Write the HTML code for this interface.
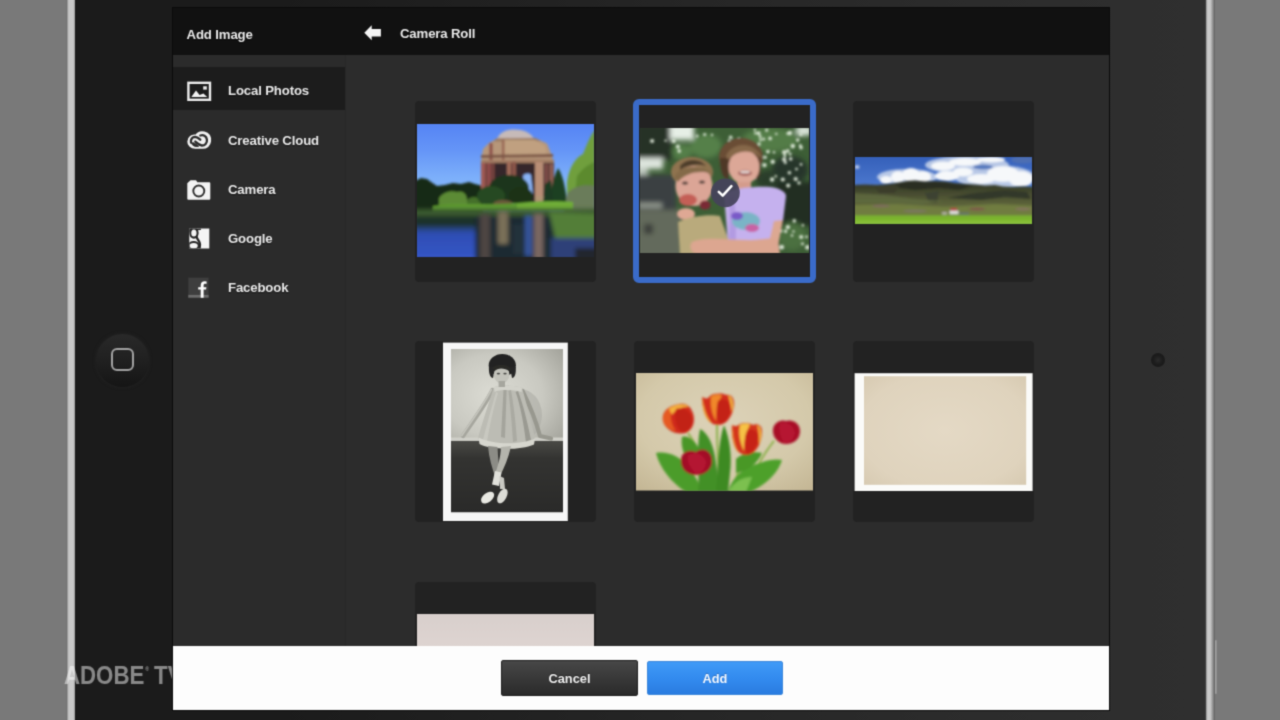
<!DOCTYPE html>
<html>
<head>
<meta charset="utf-8">
<title>Add Image</title>
<style>
*{box-sizing:border-box;margin:0;padding:0}
html,body{width:1280px;height:720px;overflow:hidden}
body{background:#797979;font-family:"Liberation Sans",sans-serif;font-weight:bold;font-size:13px;color:#e9e9e9;position:relative}
.abs{position:absolute}
#stage{position:absolute;left:-20px;top:-20px;width:1320px;height:760px;filter:url(#soft);background:#797979}
#stage>*{margin-left:20px;margin-top:20px}
#pad{display:none}
#edgeL{left:66px;top:-20px;width:9px;height:760px;background:linear-gradient(90deg,#5e5e5e 0,#8a8a8a 12%,#c6c6c6 30%,#cacaca 80%,#9a9a9a 100%)}
#edgeR{left:1205px;top:-20px;width:10px;height:760px;background:linear-gradient(90deg,#0c0c0c 0,#9a9a9a 14%,#cccccc 28%,#c4c4c4 55%,#8c8c8c 80%,#5c5c5c 100%)}
#bezel{left:75px;top:-20px;width:1130px;height:760px;background:linear-gradient(90deg,#1b1b1b 0,#1b1b1b 18%,#212121 38%,#262626 55%,#2c2c2c 80%,#2f2f2f 100%)}
#home{left:96px;top:334px;width:53px;height:53px;border-radius:50%;background:linear-gradient(180deg,#292929 0,#1f1f1f 55%,#151515 100%);box-shadow:0 0 3px 1px rgba(40,40,40,.5)}
#homesq{left:111px;top:348px;width:23px;height:23px;border:2px solid #a2a2a2;border-radius:6px}
#cam{left:1151px;top:353px;width:14px;height:14px;border-radius:50%;background:radial-gradient(circle at 50% 50%,#2b2b2b 0,#1c1c1c 45%,#171717 100%)}
#wm{left:64px;top:661.4px;font-weight:bold;font-size:26px;color:rgba(255,255,255,.48);white-space:nowrap;line-height:28px;transform:scaleX(.855);transform-origin:0 0;filter:blur(.4px)}
#wm sup{font-size:6px;vertical-align:top;position:relative;top:-6px;margin:0 0 0 1px}
#dlg{left:172px;top:7px;width:938px;height:704px;background:#0a0a0a}
#hdr{left:173px;top:8px;width:936px;height:47px;background:#111111}
#side{left:173px;top:55px;width:172px;height:591px;background:#2b2b2b}
#main{left:345px;top:55px;width:764px;height:591px;background:#2c2c2c;border-left:1px solid #272727}
#sel{left:173px;top:67px;width:172px;height:43px;background:#1c1c1c}
#foot{left:173px;top:646px;width:936px;height:64px;background:#fdfdfd}
.t{white-space:nowrap;line-height:16px;font-size:13.2px;letter-spacing:-.15px;text-shadow:0 1px 1px rgba(0,0,0,.6);filter:blur(.3px)}
.tile{width:181px;height:181px;background:#222222;border-radius:4px}
.btn{height:35px;border-radius:2px;text-align:center;line-height:35px}
#cancel{left:501px;top:660px;width:137px;height:36px;line-height:36px;background:linear-gradient(180deg,#474747 0,#3a3a3a 45%,#2a2a2a 100%);border:1px solid #1d1d1d;color:#f1f1f1;text-shadow:0 -1px 0 rgba(0,0,0,.5)}
#add{left:647px;top:661px;width:136px;height:34px;line-height:34px;background:linear-gradient(180deg,#3f9af7 0,#338bef 50%,#2a7ce0 100%);border:1px solid #3a86dc;color:#f4f9ff;text-shadow:0 -1px 0 rgba(0,40,110,.35)}
.bt{display:inline-block;font-size:12.8px;filter:blur(.3px);position:relative;top:.4px}
svg{display:block}
</style>
</head>
<body>
<svg width="0" height="0" style="position:absolute"><defs><filter id="soft" x="0" y="0" width="100%" height="100%" color-interpolation-filters="sRGB"><feConvolveMatrix order="3" kernelMatrix="0.0289 0.1122 0.0289 0.1122 0.4356 0.1122 0.0289 0.1122 0.0289" edgeMode="duplicate" preserveAlpha="true"/></filter></defs></svg>
<div id="stage">
<div id="pad"></div>
<div class="abs" id="bezel"></div>
<div class="abs" id="edgeL"></div>
<div class="abs" id="edgeR"></div>
<div class="abs" style="left:1215px;top:640px;width:2px;height:54px;background:linear-gradient(90deg,#a9a9a9,#8a8a8a);border-radius:1px"></div>
<div class="abs" id="home"></div>
<div class="abs" id="homesq"></div>
<div class="abs" id="cam"></div>
<div class="abs" id="wm">ADOBE<sup>&reg;</sup><span style="margin-left:-1.2px"> TV</span></div>

<div class="abs" id="dlg"></div>
<div class="abs" id="hdr"></div>
<div class="abs" id="side"></div>
<div class="abs" id="main"></div>
<div class="abs" id="sel"></div>

<!-- header text -->
<div class="abs t" style="left:186.6px;top:26.5px">Add Image</div>
<div class="abs t" style="left:400px;top:25.6px">Camera Roll</div>
<svg class="abs" style="left:360px;top:22px" width="26" height="22" viewBox="360 22 26 22"><polygon points="364.3,32.7 371.7,25.3 371.7,29.1 380.9,29.1 380.9,36.4 371.7,36.4 371.7,40.2" fill="#f4f4f4"/></svg>

<!-- sidebar labels -->
<div class="abs t" style="left:228px;top:83px">Local Photos</div>
<div class="abs t" style="left:228px;top:133px">Creative Cloud</div>
<div class="abs t" style="left:228px;top:182px">Camera</div>
<div class="abs t" style="left:228px;top:231px">Google</div>
<div class="abs t" style="left:228px;top:280px">Facebook</div>

<!-- ICONS -->
<svg class="abs" style="left:173px;top:55px;filter:blur(.35px)" width="172" height="300" viewBox="173 55 172 300">
 <!-- local photos -->
 <rect x="188.4" y="82.8" width="21.6" height="17" fill="none" stroke="#ececec" stroke-width="2.4"/>
 <polygon points="191.3,97 196,90.4 199.6,95 203.4,93.4 207.2,97" fill="#f2f2f2"/>
 <rect x="203.2" y="86.3" width="3.6" height="3.3" fill="#ececec"/>
 <!-- creative cloud -->
 <path d="M196.5,148.1 C190.3,148.5 187.9,144.6 188,141.5 C188.1,137.3 191.8,134.3 196,135.3 C197.7,132.6 201.2,131.6 204.3,132.3 C208.5,133.4 210.8,137 210.4,141.3 C210,145.6 206.5,148.2 202.4,148.1 Z" fill="#f1f1f1" stroke="#f1f1f1" stroke-width="1.4" stroke-linejoin="round"/>
 <g fill="none" stroke="#2b2b2b" stroke-linecap="round">
  <path d="M191,142.6 C190.3,139.2 192.4,136.9 195.1,136.8 C197.2,136.8 198.5,138 200.3,139.7" stroke-width="2.3"/>
  <path d="M200.3,135.5 C203.2,134.5 206.4,135.8 206.9,139.5 C207.4,143.2 204.8,145.7 201.7,145.5 C199.4,145.3 197.6,143.5 195.3,141.5" stroke-width="2.3"/>
 </g>
 <path d="M191.6,143.2 C192.2,145.6 195,147 198.6,146.3 L195,143.4 C194.2,142.7 192.6,142.5 191.6,143.2 Z" fill="#2b2b2b" stroke="#2b2b2b" stroke-width="1"/>
 <!-- camera -->
 <path d="M188.3,182.2 L190.6,180.2 L196,180.2 L197.4,182.2 L209.2,182.2 Q210.3,182.2 210.3,183.3 L210.3,198.7 Q210.3,199.8 209.2,199.8 L188.4,199.8 Q187.3,199.8 187.3,198.7 L187.3,183.2 Z" fill="#f3f3f3"/>
 <circle cx="198.8" cy="191" r="5.5" fill="none" stroke="#303030" stroke-width="1.9"/>
 <!-- google -->
 <clipPath id="gclip"><rect x="189.3" y="228.5" width="20" height="20"/></clipPath>
 <rect x="189.3" y="228.5" width="20" height="20" fill="#f4f4f4"/>
 <g fill="none" stroke="#262626" stroke-linecap="round" clip-path="url(#gclip)">
  <ellipse cx="193.9" cy="233" rx="3.7" ry="4.6" stroke-width="2.1"/>
  <ellipse cx="193.7" cy="245.7" rx="5" ry="3.7" stroke-width="1.9"/>
  <path d="M196.6,237 C197.4,240 200.4,241.6 199.9,245 L199.6,248" stroke-width="2.4"/>
  <path d="M196.6,229.4 L200.2,229.1" stroke-width="1.8"/>
 </g>
 <path d="M189.3,228.5 L192.4,228.5 C190.4,229.8 189.7,231.4 189.3,233.6 Z" fill="#262626"/>
 <!-- facebook -->
 <rect x="188.3" y="277.6" width="20.3" height="20.6" fill="#3e3e3e"/>
 <rect x="188.3" y="294.9" width="20.3" height="2.7" fill="#6c6c6c"/>
 <path d="M200.7,297.8 L200.7,289.6 L198.2,289.6 L198.2,287.2 L200.7,287.2 L200.7,285.4 C200.7,282.6 202.3,281.3 204.6,281.3 L206.6,281.4 L206.6,283.8 L205.2,283.8 C203.9,283.8 203.6,284.4 203.6,285.5 L203.6,287.2 L206.4,287.2 L206.1,289.6 L203.6,289.6 L203.6,297.8 Z" fill="#ffffff"/>
</svg>

<!-- TILES -->
<div class="abs tile" style="left:415px;top:101px"></div>
<div class="abs tile" style="left:853px;top:101px"></div>
<div class="abs tile" style="left:415px;top:341px"></div>
<div class="abs tile" style="left:634px;top:341px"></div>
<div class="abs tile" style="left:853px;top:341px"></div>
<div class="abs tile" style="left:415px;top:582px;height:70px"></div>
<div class="abs" style="left:633px;top:99px;width:183px;height:184px;border:6px solid #3a6bc9;border-radius:6px;background:#222222"></div>

<!-- PHOTOS -->
<!-- photo 1: palace -->
<svg class="abs" style="left:416.5px;top:124px" width="177.5" height="133.2" viewBox="0 0 177.5 133.2" preserveAspectRatio="none">
 <defs>
  <linearGradient id="p1sky" x1="0" y1="0" x2="0" y2="1"><stop offset="0" stop-color="#5584f4"/><stop offset=".2" stop-color="#6595f7"/><stop offset=".4" stop-color="#7caffa"/><stop offset=".6" stop-color="#8cbcfa"/></linearGradient>
  <linearGradient id="p1wat" x1="0" y1="0" x2="0" y2="1"><stop offset="0" stop-color="#2a4a26"/><stop offset=".28" stop-color="#21384a"/><stop offset=".45" stop-color="#2e4eb4"/><stop offset="1" stop-color="#3656c8"/></linearGradient>
  <filter id="b1" x="-5%" y="-5%" width="110%" height="110%"><feGaussianBlur stdDeviation="0.9"/></filter>
  <filter id="b2" x="-10%" y="-10%" width="120%" height="120%"><feGaussianBlur stdDeviation="2"/></filter>
  <clipPath id="c1"><rect x="0" y="0" width="177.5" height="133.2"/></clipPath>
 </defs>
 <g clip-path="url(#c1)">
 <rect width="177.5" height="133.2" fill="url(#p1sky)"/>
 <g filter="url(#b1)">
  <!-- right pale area + light tree -->
  <path d="M150,58 C152,44 158,34 166,30 C170,20 174,10 178,6 L178,90 L150,90 Z" fill="#6f9f3e"/>
  <path d="M160,52 C166,44 172,40 178,38 L178,70 L158,70 Z" fill="#5b8a2e"/>
  <!-- left tree line -->
  <path d="M-2,57 L4,54 L10,55 L14,58 L20,62 L28,61 L36,59 L44,60 L52,58 L58,60 L66,62 L66,90 L-2,90 Z" fill="#182a15"/>
  <path d="M22,74 C26,68 34,66 40,68 C46,66 50,70 50,76 L50,84 L22,84 Z" fill="#5b8b34"/>
  <path d="M50,76 C54,72 60,72 64,76 L64,84 L50,84 Z" fill="#456f2a"/>
  <!-- dome -->
  <path d="M80,15 C83,7.5 90,5.5 97,5.5 C106,5.5 114,8.5 117,15 Z" fill="#c6bab8"/>
  <path d="M66,25 L72,19 L80,14.5 L118,14 L130,19.5 L135,32 L136,40 L64,40 L65,31 Z" fill="#b7977a"/>
  <path d="M80,14.5 L118,14 L124,17 L76,17.5 Z" fill="#9a7a62"/>
  <path d="M86,16 L118,16 L128,22 L130,33 L86,35 Z" fill="#c0a080"/>
  <rect x="72.5" y="19" width="3" height="22" fill="#8a4a44"/>
  <rect x="85" y="16" width="2.4" height="22" fill="#946050"/>
  <path d="M64,31 L136,30 L136,33 L64,34 Z" fill="#7a5444"/>
  <path d="M64,36 L137,35.5 L137,39 L64,39.5 Z" fill="#a07a62"/>
  <!-- colonnade -->
  <rect x="64" y="39" width="73" height="40" fill="#35262a"/>
  <rect x="64" y="39" width="4.6" height="32" fill="#a05a52"/>
  <rect x="69.4" y="39" width="4.6" height="32" fill="#8e4c48"/>
  <rect x="74.6" y="39" width="3" height="32" fill="#7a4440"/>
  <rect x="90" y="38" width="4" height="22" fill="#a26c5a"/>
  <rect x="95" y="38" width="4" height="22" fill="#8c5648"/>
  <rect x="118" y="38" width="8.4" height="41" fill="#b98e76"/>
  <rect x="127.4" y="40" width="4" height="34" fill="#7e4c46"/>
  <rect x="132.4" y="40" width="4" height="34" fill="#905e52"/>
  <path d="M106,52 C108,49 112,49 114,51 L116,70 L108,70 Z" fill="#8ab4f6"/>
  <rect x="118" y="72" width="18" height="8" fill="#b29474"/>
  <!-- front trees -->
  <ellipse cx="92" cy="64" rx="20" ry="13" fill="#1b361a"/>
  <ellipse cx="74" cy="72" rx="14" ry="10" fill="#254a20"/>
  <ellipse cx="104" cy="72" rx="12" ry="9" fill="#1a3218"/>
  <ellipse cx="86" cy="80" rx="10" ry="4" fill="#6a5a3a"/>
  <!-- cypress -->
  <path d="M141,44 C145,50 148,60 150,78 L133,78 C134,64 137,52 141,44 Z" fill="#1f3f24"/>
  <path d="M128,60 L134,56 L136,78 L126,78 Z" fill="#1f3a20"/>
  <!-- right bush -->
  <path d="M150,70 C156,62 168,60 178,62 L178,104 L146,96 Z" fill="#6a7c5a"/>
  <!-- grass bank -->
  <path d="M16,82 C40,78 70,82 100,79 C120,77 140,77 156,78 L156,87 L16,88 Z" fill="#5d9a30"/>
  <path d="M100,80 C120,77 140,77 156,78 L156,85 L100,86 Z" fill="#6fae38"/>
 </g>
 <!-- water -->
 <g filter="url(#b2)">
  <rect x="-4" y="86" width="186" height="52" fill="url(#p1wat)"/>
  <rect x="-4" y="85" width="186" height="7" fill="#3a5a2e"/>
  <rect x="-4" y="92" width="70" height="10" fill="#1c302c"/>
  <rect x="58" y="92" width="80" height="46" fill="#1a2a30"/>
  <rect x="63" y="90" width="10" height="46" fill="#4e4442"/>
  <rect x="81" y="88" width="10" height="32" fill="#7a7058"/>
  <rect x="117" y="90" width="9" height="46" fill="#7a6862"/>
  <rect x="108" y="92" width="7" height="40" fill="#34549c"/>
  <rect x="96" y="100" width="10" height="30" fill="#22303a"/>
  <path d="M132,88 L182,90 L182,118 L138,114 Z" fill="#527e38"/>
  <rect x="134" y="114" width="48" height="24" fill="#2e4078"/>
  <rect x="158" y="124" width="26" height="14" fill="#23272f"/>
 </g>
 </g>
</svg>
<!-- photo 2: kids -->
<svg class="abs" style="left:639.5px;top:128px" width="169.5" height="125" viewBox="0 0 169.5 125" preserveAspectRatio="none">
 <defs>
  <filter id="k1" x="-5%" y="-5%" width="110%" height="110%"><feGaussianBlur stdDeviation="1.1"/></filter>
  <filter id="k2" x="-10%" y="-10%" width="120%" height="120%"><feGaussianBlur stdDeviation="2.4"/></filter>
  <clipPath id="c2"><rect x="0" y="0" width="169.5" height="125"/></clipPath>
 </defs>
 <g clip-path="url(#c2)">
  <rect width="169.5" height="125" fill="#3d5e36"/>
  <g filter="url(#k2)">
   <rect x="-4" y="-4" width="36" height="36" fill="#263226"/>
   <rect x="30" y="-4" width="24" height="16" fill="#e6efe6"/>
   <rect x="-4" y="30" width="27" height="11" fill="#dde5dd"/>
   <rect x="-4" y="40" width="12" height="7" fill="#bcc6bc"/>
   <ellipse cx="66" cy="18" rx="16" ry="12" fill="#55804a"/>
   <ellipse cx="42" cy="24" rx="10" ry="8" fill="#557f48"/>
   <ellipse cx="130" cy="12" rx="28" ry="12" fill="#527c46"/>
   <ellipse cx="164" cy="3" rx="9" ry="5" fill="#dfe8df"/>
   <ellipse cx="150" cy="42" rx="18" ry="14" fill="#26362a"/>
   <ellipse cx="128" cy="52" rx="12" ry="10" fill="#2a3c2a"/>
   <rect x="136" y="54" width="42" height="44" fill="#222e24"/>
   <ellipse cx="152" cy="108" rx="14" ry="14" fill="#4c7040"/>
   <rect x="-4" y="47" width="40" height="36" fill="#3b4043"/>
   <rect x="-4" y="82" width="46" height="48" fill="#646a5b"/>
   <rect x="-2" y="75" width="24" height="5" fill="#92998f"/>
   <rect x="4" y="96" width="9" height="10" fill="#3a3e3a"/>
  </g>
  <g filter="url(#k1)">
   <!-- white flower spots -->
   <g fill="#e6f0e0" opacity=".9">
    <circle cx="130.1" cy="10.4" r="1.9"/><circle cx="116.1" cy="32.0" r="1.5"/><circle cx="115.2" cy="30.4" r="1.1"/><circle cx="136.3" cy="5.9" r="1.2"/><circle cx="135.8" cy="48.3" r="1.2"/><circle cx="124.5" cy="37.1" r="2.2"/><circle cx="144.3" cy="24.2" r="2.3"/><circle cx="114.6" cy="50.1" r="1.4"/><circle cx="120.1" cy="8.6" r="1.5"/><circle cx="157.7" cy="12.1" r="1.8"/><circle cx="147.8" cy="22.9" r="1.8"/><circle cx="115.5" cy="5.3" r="1.3"/><circle cx="150.1" cy="25.9" r="1.5"/><circle cx="144.8" cy="27.4" r="1.5"/><circle cx="156.5" cy="41.1" r="1.4"/><circle cx="144.2" cy="31.4" r="2.2"/><circle cx="152.8" cy="18.1" r="2.3"/><circle cx="118.6" cy="25.4" r="2.0"/><circle cx="120.5" cy="29.4" r="1.1"/><circle cx="149.4" cy="44.8" r="1.8"/><circle cx="161.0" cy="19.6" r="1.9"/><circle cx="145.3" cy="34.5" r="1.6"/><circle cx="159.0" cy="54.9" r="1.7"/><circle cx="149.2" cy="5.4" r="1.9"/><circle cx="148.2" cy="57.6" r="2.1"/><circle cx="127.9" cy="23.6" r="1.9"/><circle cx="113.3" cy="27.9" r="1.3"/><circle cx="118.6" cy="5.3" r="2.0"/><circle cx="119.2" cy="15.9" r="1.6"/><circle cx="160.8" cy="6.5" r="1.6"/><circle cx="142.8" cy="51.5" r="2.1"/><circle cx="160.4" cy="17.6" r="1.6"/><circle cx="132.1" cy="51.5" r="2.2"/><circle cx="120.5" cy="11.9" r="1.4"/><circle cx="125.1" cy="29.2" r="1.8"/><circle cx="126.7" cy="2.2" r="1.6"/><circle cx="132.7" cy="33.7" r="2.2"/><circle cx="150.7" cy="30.9" r="1.8"/><circle cx="149.9" cy="5.0" r="2.2"/><circle cx="155.7" cy="51.0" r="2.1"/><circle cx="134.0" cy="24.3" r="1.2"/><circle cx="147.5" cy="5.5" r="1.2"/><circle cx="123.7" cy="11.1" r="1.5"/><circle cx="114.9" cy="2.0" r="1.3"/><circle cx="117.7" cy="22.4" r="1.1"/><circle cx="161.0" cy="36.4" r="1.3"/><circle cx="145.6" cy="103.1" r="1.6"/><circle cx="141.7" cy="119.2" r="2.4"/><circle cx="152.0" cy="107.5" r="1.3"/><circle cx="141.1" cy="103.0" r="1.5"/><circle cx="162.9" cy="97.2" r="1.2"/><circle cx="166.5" cy="108.9" r="1.4"/><circle cx="154.3" cy="92.9" r="1.8"/><circle cx="167.4" cy="119.6" r="2.0"/><circle cx="145.8" cy="103.7" r="1.4"/><circle cx="161.2" cy="109.0" r="2.1"/><circle cx="147.9" cy="99.1" r="2.2"/><circle cx="167.5" cy="119.3" r="2.2"/><circle cx="162.5" cy="115.7" r="1.5"/><circle cx="153.5" cy="103.4" r="1.2"/><circle cx="57.2" cy="8.1" r="1.3"/><circle cx="86.5" cy="23.0" r="1.4"/><circle cx="97.2" cy="23.7" r="2.0"/><circle cx="72.0" cy="6.9" r="1.2"/><circle cx="64.7" cy="6.5" r="1.6"/><circle cx="95.6" cy="20.5" r="1.5"/><circle cx="84.7" cy="19.6" r="1.1"/><circle cx="85.1" cy="22.0" r="1.8"/><circle cx="89.0" cy="12.5" r="1.2"/><circle cx="90.7" cy="9.3" r="1.8"/><circle cx="98.8" cy="10.7" r="1.4"/><circle cx="97.7" cy="17.9" r="1.2"/><circle cx="12.1" cy="13.0" r="2.1"/><circle cx="33.8" cy="12.9" r="2.0"/><circle cx="39.4" cy="23.1" r="1.6"/><circle cx="25.6" cy="12.6" r="1.2"/><circle cx="39.1" cy="23.0" r="1.7"/><circle cx="37.9" cy="18.7" r="2.1"/>
   </g>
   <!-- girl -->
   <ellipse cx="101" cy="29" rx="22" ry="19" fill="#6a4e36"/>
   <path d="M80,30 C80,46 84,50 88,52 L90,30 Z" fill="#4f3828"/>
   <path d="M120,30 C122,44 120,50 116,52 L114,30 Z" fill="#4f3828"/>
   <ellipse cx="104" cy="39" rx="15.5" ry="17" fill="#dca797"/>
   <path d="M86,28 C92,14 114,12 122,30 C112,21 98,21 88,32 Z" fill="#86684a"/>
   <ellipse cx="105" cy="45" rx="7" ry="3" fill="#a4605c"/>
   <ellipse cx="105" cy="44" rx="5" ry="1.3" fill="#e8dcd8"/>
   <rect x="97" y="54" width="14" height="10" fill="#d49c8c"/>
   <path d="M84,66 C92,60 118,58 130,59 C140,60 146,64 146,68 L143,93 L134,94 L132,113 L88,116 Z" fill="#c5b1ee"/>
   <path d="M88,70 C90,84 90,100 88,116 L96,115 C96,100 96,84 94,68 Z" fill="#b29be2"/>
   <ellipse cx="106" cy="93" rx="14" ry="9" fill="#7ab4c6"/>
   <ellipse cx="112" cy="100" rx="7" ry="4" fill="#c862a4"/>
   <ellipse cx="97" cy="88" rx="6" ry="4" fill="#7a5ac8"/>
   <path d="M134,93 L143,92 L138,118 L128,118 Z" fill="#dca892"/>
   <!-- boy -->
   <ellipse cx="52" cy="44" rx="21" ry="15" fill="#8f7350"/>
   <ellipse cx="54" cy="58" rx="18.5" ry="20" fill="#dba596"/>
   <path d="M34,50 C38,38 62,34 72,46 C62,42 46,44 38,54 Z" fill="#846a48"/>
   <path d="M40,38 C46,30 60,30 66,38 C60,36 48,36 40,42 Z" fill="#4e3c2c"/>
   <ellipse cx="45" cy="55" rx="3" ry="1.6" fill="#4a3a34"/>
   <ellipse cx="62" cy="54" rx="3" ry="1.6" fill="#4a3a34"/>
   <ellipse cx="48" cy="72" rx="9" ry="6" fill="#c45e56"/>
   <ellipse cx="65" cy="77" rx="5.5" ry="4.5" fill="#7a2c34"/>
   <ellipse cx="46" cy="86" rx="9" ry="6" fill="#dfa894"/>
   <path d="M38,94 C50,88 70,86 80,88 L90,116 L88,128 L40,128 Z" fill="#b9aa7c"/>
   <!-- arm across -->
   <path d="M52,114 C64,108 90,112 110,112 C124,112 132,108 138,112 L140,126 L60,127 C52,126 48,120 52,114 Z" fill="#dca690"/>
  </g>
 </g>
</svg>
<!-- check badge -->
<svg class="abs" style="left:705px;top:172px;filter:blur(.4px)" width="42" height="42" viewBox="705 172 42 42">
 <circle cx="725.4" cy="192.8" r="14.4" fill="#45435a" fill-opacity=".93"/>
 <path d="M718.8,191.9 L722.7,195.6 L731.4,186.2" fill="none" stroke="#ffffff" stroke-width="2.6" stroke-linecap="round" stroke-linejoin="round"/>
</svg>
<!-- photo 3: panorama -->
<svg class="abs" style="left:855px;top:157px" width="177" height="67" viewBox="0 0 177 67" preserveAspectRatio="none">
 <defs>
  <linearGradient id="p3sky" x1="0" y1="0" x2="0" y2="1"><stop offset="0" stop-color="#3560ba"/><stop offset=".4" stop-color="#4a76cc"/></linearGradient>
  <linearGradient id="p3hill" x1="0" y1="0" x2="0" y2="1"><stop offset="0" stop-color="#2e3124"/><stop offset=".3" stop-color="#43482e"/><stop offset=".65" stop-color="#5c633a"/><stop offset="1" stop-color="#707c40"/></linearGradient>
  <filter id="m1" x="-5%" y="-10%" width="110%" height="120%"><feGaussianBlur stdDeviation="0.8"/></filter>
  <filter id="m2" x="-10%" y="-20%" width="120%" height="140%"><feGaussianBlur stdDeviation="1.3"/></filter>
  <clipPath id="c3"><rect x="0" y="0" width="177" height="67"/></clipPath>
 </defs>
 <g clip-path="url(#c3)">
  <rect width="177" height="67" fill="url(#p3sky)"/>
  <g filter="url(#m2)">
   <g fill="#dfe6f2" opacity=".75">
    <ellipse cx="52" cy="20" rx="30" ry="8"/>
    <ellipse cx="112" cy="8" rx="42" ry="9"/>
    <ellipse cx="140" cy="20" rx="40" ry="12"/>
   </g>
   <g fill="#f6f8fa">
    <ellipse cx="31" cy="23" rx="6" ry="4"/>
    <ellipse cx="43" cy="20" rx="7" ry="6"/>
    <ellipse cx="56" cy="18" rx="9" ry="7"/>
    <ellipse cx="68" cy="20" rx="8" ry="6"/>
    <ellipse cx="88" cy="9" rx="12" ry="4.5"/>
    <ellipse cx="110" cy="5" rx="16" ry="4"/>
    <ellipse cx="136" cy="2.5" rx="14" ry="3"/>
    <ellipse cx="92" cy="19" rx="12" ry="5"/>
    <ellipse cx="108" cy="15" rx="10" ry="4.5"/>
    <ellipse cx="126" cy="22" rx="14" ry="5"/>
    <ellipse cx="148" cy="17" rx="16" ry="8"/>
    <ellipse cx="166" cy="22" rx="12" ry="8"/>
   </g>
   <ellipse cx="128" cy="10" rx="10" ry="2.6" fill="#5579be"/>
   <ellipse cx="168" cy="3" rx="12" ry="3.5" fill="#4d6eb2"/>
   <ellipse cx="2" cy="10" rx="2.6" ry="1.8" fill="#c8d4ee"/>
  </g>
  <g filter="url(#m1)">
   <path d="M-2,28 L10,27.5 L22,28 L34,27 L44,25.5 L52,24 L60,23.5 L70,24.5 L80,24 L90,24.5 L100,26 L110,27 L120,27.5 L130,28.5 L140,28 L148,29.5 L158,30 L168,29.5 L180,30 L180,60 L-2,60 Z" fill="url(#p3hill)"/>
   <path d="M40,27 L60,25 L90,26 L118,29 L104,33 L84,31 L60,33 L44,31 Z" fill="#2b2e20"/>
   <path d="M20,30 L44,28 L40,36 L24,36 Z" fill="#3a3c2a"/>
   <path d="M92,41 L120,36 L150,33 L172,35 L176,42 L150,40 L126,43 Z" fill="#33382a"/>
   <path d="M70,36 L84,34 L82,46 L74,46 Z" fill="#3c4230"/>
   <path d="M-2,36 L30,38 L60,42 L90,44 L60,48 L20,46 L-2,46 Z" fill="#5f6a3e" opacity=".8"/>
   <path d="M-2,48 L40,47 L90,50 L140,47 L180,49 L180,60 L-2,60 Z" fill="#6f7c40"/>
   <ellipse cx="26" cy="49" rx="9" ry="1.5" fill="#7e6c5c"/>
   <ellipse cx="122" cy="52" rx="8" ry="1.5" fill="#80584c"/>
   <ellipse cx="168" cy="52" rx="8" ry="1.5" fill="#84725e"/>
   <ellipse cx="60" cy="54" rx="12" ry="1.3" fill="#7c7862"/>
   <rect x="-2" y="58.4" width="182" height="10" fill="#7ab42f"/>
   <rect x="-2" y="63.5" width="182" height="4" fill="#88c038"/>
   <rect x="95.5" y="51" width="6.5" height="3" fill="#b0383c"/>
   <rect x="94.5" y="53.6" width="9" height="3.6" fill="#dcdedb"/>
   <rect x="87" y="55" width="5" height="2.6" fill="#b0b0a0"/>
   <rect x="104" y="55.4" width="10" height="2.4" fill="#66766a"/>
  </g>
 </g>
</svg>
<!-- photo 4: b&w portrait -->
<svg class="abs" style="left:442px;top:341px" width="128" height="182" viewBox="442 341 128 182">
 <defs>
  <radialGradient id="p4wall" cx=".38" cy=".5" r=".8"><stop offset="0" stop-color="#dcdcd4"/><stop offset=".55" stop-color="#c9c9c1"/><stop offset="1" stop-color="#a2a29a"/></radialGradient>
  <linearGradient id="p4bench" x1="0" y1="0" x2="0" y2="1"><stop offset="0" stop-color="#4a4a46"/><stop offset=".25" stop-color="#333331"/><stop offset="1" stop-color="#2a2a29"/></linearGradient>
  <filter id="g1" x="-10%" y="-10%" width="120%" height="120%"><feGaussianBlur stdDeviation="0.6"/></filter>
  <clipPath id="c4"><rect x="451" y="349" width="112" height="163.5"/></clipPath>
 </defs>
 <rect x="443" y="342.6" width="124.8" height="178.4" fill="#f6f6f6"/>
 <g clip-path="url(#c4)">
  <rect x="451" y="349" width="112" height="92" fill="url(#p4wall)"/>
  <rect x="451" y="440.5" width="112" height="72" fill="url(#p4bench)"/>
  <g filter="url(#g1)">
   <rect x="451" y="437.5" width="112" height="3.4" fill="#cfcfc8"/>
   <!-- shadow on wall -->
   <ellipse cx="520" cy="415" rx="22" ry="26" fill="#a9a9a2" opacity=".55"/>
   <!-- arms -->
   <path d="M492.5,390 C487,402 473,421 463,436" fill="none" stroke="#a6a69e" stroke-width="4.4" stroke-linecap="round"/>
   <path d="M522.5,391 C529,404 536,421 540,436 L551,438.5" fill="none" stroke="#98988f" stroke-width="4.2" stroke-linecap="round" stroke-linejoin="round"/>
   <path d="M492.5,390 C487,402 473,421 463,436" fill="none" stroke="#c4c4bc" stroke-width="1.6" stroke-linecap="round" transform="translate(-1.2,-.4)"/>
   <!-- dress -->
   <path d="M494,387 C500,384.8 512,384.8 522,387.6 C526,402 531,422 535,438 C532,445 522,447.5 506,447.5 C492,447.5 481,445 478,438 C483,420 489,402 494,387 Z" fill="#bcbcb4"/>
   <path d="M494,387 C500,384.8 512,384.8 522,387.6 L521.5,392 C512,389.4 500,389.4 494.5,392 Z" fill="#d2d2ca"/>
   <path d="M503.5,390 L501,437 L505,438 L506.6,390 Z" fill="#a4a49c"/>
   <path d="M511,390 C513.5,404 516,424 517,441 L513,442 C512,424 510,404 508.4,391 Z" fill="#aaaaa2"/>
   <path d="M518,391 C523,404 528,424 531,440 L526,443 C524,424 520,404 515.6,392 Z" fill="#9a9a92"/>
   <path d="M496,392 C492,406 487,424 483,440 L487,442 C490,424 494,406 498,393 Z" fill="#c8c8c0"/>
   <path d="M478.5,437.5 C492,444.5 520,445.5 535,438.5 L534,444.5 C520,450.5 492,450.5 479.5,444 Z" fill="#d6d6ce"/>
   <!-- hair -->
   <ellipse cx="502.3" cy="365.3" rx="13.6" ry="11.4" fill="#242422"/>
   <path d="M489,367 C488.5,373 490,377.5 493,378 L495,367 Z" fill="#282826"/>
   <path d="M515.6,367 C516.4,373 515,377.5 512,378 L510,367 Z" fill="#282826"/>
   <!-- face/neck -->
   <ellipse cx="501.6" cy="374.4" rx="7.8" ry="9" fill="#c2c2ba"/>
   <path d="M492.6,368 C497,363.6 507,363.6 511.4,369 L509.6,371.4 C504,367.6 498,367.6 494,371.6 Z" fill="#2a2a28"/>
   <ellipse cx="498.4" cy="373.6" rx="1.7" ry=".9" fill="#4a4a46"/>
   <ellipse cx="505" cy="373.6" rx="1.7" ry=".9" fill="#4a4a46"/>
   <rect x="498.6" y="381" width="6.4" height="6" fill="#a6a69e"/>
   <!-- legs -->
   <path d="M488,446 L497.5,447 C498,458 499,468 501,478 L496,479 C492,468 489,458 488,446 Z" fill="#8c8c86"/>
   <path d="M501,447 L511,446 C508.5,458 504,468 499.5,477 L494.5,475 C498,466 500.5,458 501,447 Z" fill="#b4b4ac"/>
   <!-- socks -->
   <path d="M495,471 L501.5,472.5 L499,486 L492,484.5 Z" fill="#e0e0da"/>
   <path d="M499.5,476 L504,478 L505,489 L500,489 Z" fill="#c8c8c2"/>
   <!-- shoes -->
   <ellipse cx="487.6" cy="497.6" rx="7.6" ry="4.6" transform="rotate(-38 487.6 497.6)" fill="#e8e8e2"/>
   <ellipse cx="502.4" cy="496" rx="8" ry="4.2" transform="rotate(-62 502.4 496)" fill="#dcdcd6"/>
  </g>
 </g>
</svg>
<!-- photo 5: tulips -->
<svg class="abs" style="left:636px;top:373.3px" width="177" height="117.7" viewBox="0 0 177 117.7" preserveAspectRatio="none">
 <defs>
  <radialGradient id="p5bg" cx=".5" cy=".4" r=".8"><stop offset="0" stop-color="#dcd2b8"/><stop offset=".6" stop-color="#d4c9aa"/><stop offset="1" stop-color="#c2b492"/></radialGradient>
  <radialGradient id="tu1" cx=".5" cy=".6" r=".6"><stop offset="0" stop-color="#d8281a"/><stop offset=".7" stop-color="#e03c1c"/><stop offset="1" stop-color="#f0a030"/></radialGradient>
  <radialGradient id="tu2" cx=".5" cy=".5" r=".6"><stop offset="0" stop-color="#b0102c"/><stop offset="1" stop-color="#9c0c26"/></radialGradient>
  <filter id="f5" x="-5%" y="-5%" width="110%" height="110%"><feGaussianBlur stdDeviation="0.8"/></filter>
  <clipPath id="c5"><rect x="0" y="0" width="177" height="117.7"/></clipPath>
 </defs>
 <g clip-path="url(#c5)">
  <rect width="177" height="117.7" fill="url(#p5bg)"/>
  <g filter="url(#f5)">
   <!-- stems -->
   <g fill="none" stroke="#8ab04a" stroke-width="2">
    <path d="M52,60 C58,68 62,76 66,90"/><path d="M81,52 C81,70 82,90 84,116"/><path d="M108,80 C104,92 100,104 98,116"/><path d="M138,68 C130,78 124,88 118,100"/>
   </g>
   <!-- leaves -->
   <path d="M20,80 C30,78 44,82 54,96 C60,104 64,112 66,119 L50,119 C36,110 24,96 20,80 Z" fill="#4c9c2a"/>
   <path d="M46,64 C52,62 60,68 64,78 C60,82 54,84 50,84 C46,78 45,70 46,64 Z" fill="#4a9628"/>
   <path d="M64,56 C72,60 78,72 80,90 L84,119 L62,119 C64,100 60,76 64,56 Z" fill="#429026"/>
   <path d="M88,52 C94,66 96,84 94,100 L92,119 L80,119 C82,96 82,70 88,52 Z" fill="#3c8a24"/>
   <path d="M92,119 C96,104 108,94 124,90 C134,86 142,86 146,87 C142,100 130,112 114,119 Z" fill="#4ea02c"/>
   <path d="M100,86 C106,80 118,78 126,80 C122,90 112,98 100,100 Z" fill="#489828"/>
   <path d="M92,119 C98,108 108,104 116,104 L110,119 Z" fill="#7cc050"/>
   <!-- tulips -->
   <g>
    <!-- t1 left -->
    <path d="M27,48 C25,40 32,32 44,31 C50,30 54,33 56,38 C60,46 58,56 50,60 C40,62 30,58 27,48 Z" fill="#cf2a1a"/>
    <path d="M27,48 C26,42 30,36 36,33 C34,40 34,50 40,58 C33,57 28,53 27,48 Z" fill="#e65a20"/>
    <path d="M33,36 C38,31 48,30 54,34 C48,33 40,36 36,42 Z" fill="#f4b23c"/>
    <path d="M40,36 C48,34 56,40 56,48 C56,54 52,58 46,59 C40,54 38,44 40,36 Z" fill="#c22018"/>
    <!-- t2 top -->
    <path d="M66,24 C70,26 72,26 74,23 C78,20 86,20 90,22 C94,21 98,24 98,30 C98,40 92,52 82,52 C72,52 66,40 66,24 Z" fill="#d22e1a"/>
    <path d="M66,24 C68,34 70,44 76,50 C70,48 66,38 66,24 Z" fill="#f2a838"/>
    <path d="M75,24 C78,21 84,21 86,23 C82,28 80,38 80,48 C76,42 74,32 75,24 Z" fill="#f0882c"/>
    <path d="M92,22 C97,24 98,32 96,40 C95,34 94,28 92,22 Z" fill="#f4b640"/>
    <path d="M82,28 C88,24 94,28 94,36 C94,44 90,50 84,51 C80,44 80,34 82,28 Z" fill="#c42218"/>
    <!-- t3 middle right -->
    <path d="M96,52 C99,54 102,53 104,51 C108,49 114,50 117,52 C121,50 126,52 126,58 C126,70 120,82 110,82 C100,82 95,68 96,52 Z" fill="#d4341c"/>
    <path d="M96,52 C97,62 98,72 103,80 C98,76 95,64 96,52 Z" fill="#f09030"/>
    <path d="M104,52 C108,50 112,50 114,52 C110,58 108,68 108,78 C104,70 102,60 104,52 Z" fill="#f6c244"/>
    <path d="M121,52 C126,54 126,64 123,72 C123,64 123,58 121,52 Z" fill="#f4b43c"/>
    <path d="M111,58 C116,54 123,58 122,66 C121,74 117,80 111,81 C108,74 108,64 111,58 Z" fill="#c62418"/>
    <!-- t4 far right dark -->
    <path d="M137,56 C138,50 144,46 150,48 C156,46 164,50 164,58 C164,66 158,71 150,71 C142,71 136,64 137,56 Z" fill="#a80e28"/>
    <path d="M144,50 C150,48 158,52 159,60 C158,66 154,70 148,70 C144,64 142,56 144,50 Z" fill="#b61432"/>
    <!-- t5 bottom-left dark -->
    <path d="M45,86 C46,78 54,76 60,79 C66,74 75,77 76,86 C77,96 70,102 60,102 C50,102 44,95 45,86 Z" fill="#a20c26"/>
    <path d="M52,82 C58,78 68,80 70,88 C71,96 66,100 60,101 C54,96 50,88 52,82 Z" fill="#b41230"/>
   </g>
  </g>
 </g>
</svg>
<!-- photo 6: paper -->
<svg class="abs" style="left:854px;top:372px" width="180" height="120" viewBox="854 372 180 120">
 <defs>
  <radialGradient id="p6" cx=".5" cy=".5" r=".75"><stop offset="0" stop-color="#e4d9c5"/><stop offset=".7" stop-color="#dfd3bd"/><stop offset="1" stop-color="#d5c8af"/></radialGradient>
  <filter id="f6" x="-5%" y="-5%" width="110%" height="110%"><feGaussianBlur stdDeviation="0.7"/></filter>
 </defs>
 <rect x="854.6" y="373.2" width="178" height="117.8" fill="#fbfbf9"/>
 <rect x="864" y="376.2" width="162.2" height="108.6" fill="url(#p6)" filter="url(#f6)"/>
</svg>
<!-- photo 7: cut off -->
<div class="abs" style="left:417px;top:614px;width:177px;height:34px;background:linear-gradient(180deg,#d8cfcc 0,#ded4d1 100%)"></div>

<!-- footer -->
<div class="abs" id="foot"></div>
<div class="abs btn" id="cancel"><span class="bt">Cancel</span></div>
<div class="abs btn" id="add"><span class="bt">Add</span></div>
</div>
</body>
</html>
